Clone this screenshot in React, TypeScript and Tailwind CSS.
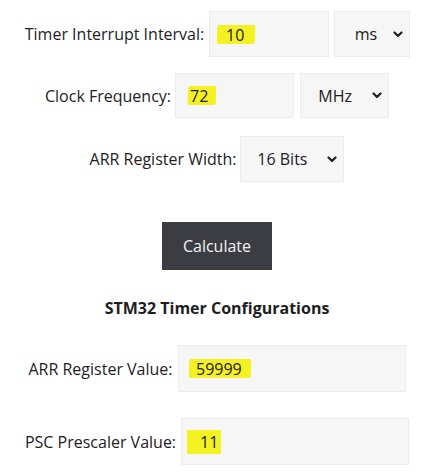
import React from "react";

const Chevron = () => (
  <svg width="10" height="7" viewBox="0 0 10 7" className="shrink-0">
    <path d="M1.5 1.5 L5 5 L8.5 1.5" fill="none" stroke="#222" strokeWidth="2.2" strokeLinecap="round" strokeLinejoin="round" />
  </svg>
);

const Hl = ({ children, w, pl }: { children: React.ReactNode; w: string; pl: string }) => (
  <span className={`relative inline-flex items-center h-[19px] ${w} ${pl} bg-[#f4f122] rounded-[2px] -skew-x-2`}>
    <span className="skew-x-2">{children}</span>
  </span>
);

export default function App() {
  return (
    <div className="w-[434px] h-[475px] bg-white text-[#1f2024] text-[16px] flex flex-col items-center" style={{ fontFamily: '"Open Sans", "Noto Sans", sans-serif' }}>
      {/* Row 1 */}
      <div className="mt-[11px] flex items-center pl-[1px]">
        <span className="mr-[5px]">Timer Interrupt Interval:</span>
        <div className="w-[120px] h-[46px] bg-[#f6f6f7] border border-[#ececee] flex items-center pl-[7px]">
          <Hl w="w-[38px]" pl="pl-[9px]">10</Hl>
        </div>
        <div className="ml-[5px] w-[76px] h-[46px] bg-[#f6f6f7] border border-[#ececee] flex items-center justify-end pr-[6px] gap-[16px]">
          <span>ms</span>
          <Chevron />
        </div>
      </div>
      {/* Row 2 */}
      <div className="mt-[16px] flex items-center">
        <span className="mr-[4px]">Clock Frequency:</span>
        <div className="w-[119px] h-[45px] bg-[#f6f6f7] border border-[#ececee] flex items-center pl-[12px]">
          <Hl w="w-[28px]" pl="pl-[2px]">72</Hl>
        </div>
        <div className="ml-[6px] w-[89px] h-[45px] bg-[#f6f6f7] border border-[#ececee] flex items-center justify-end pr-[6px] gap-[20px]">
          <span>MHz</span>
          <Chevron />
        </div>
      </div>
      {/* Row 3 */}
      <div className="mt-[18px] flex items-center">
        <span className="mr-[4px]">ARR Register Width:</span>
        <div className="w-[104px] h-[46px] bg-[#f6f6f7] border border-[#ececee] flex items-center justify-end pr-[6px] gap-[20px]">
          <span>16 Bits</span>
          <Chevron />
        </div>
      </div>
      {/* Button */}
      <button className="mt-[40px] w-[110px] h-[48px] bg-[#3c3d43] text-[#f2f2f2] text-[16px]">Calculate</button>
      {/* Heading */}
      <div className="mt-[27px] font-bold text-[16px] leading-[22px] text-[#1d1e22]">STM32 Timer Configurations</div>
      {/* ARR value */}
      <div className="mt-[26px] flex items-center">
        <span className="mr-[5px]">ARR Register Value:</span>
        <div className="w-[228px] h-[47px] bg-[#f6f6f7] border border-[#ececee] flex items-center pl-[10px]">
          <Hl w="w-[62px]" pl="pl-[7px]">59999</Hl>
        </div>
      </div>
      {/* PSC value */}
      <div className="mt-[26px] flex items-center">
        <span className="mr-[5px]">PSC Prescaler Value:</span>
        <div className="w-[228px] h-[47px] bg-[#f6f6f7] border border-[#ececee] flex items-center pl-[5px]">
          <span className="inline-flex items-center h-[24px] w-[34px] pl-[13px] bg-[#f4f122]">11</span>
        </div>
      </div>
    </div>
  );
}
